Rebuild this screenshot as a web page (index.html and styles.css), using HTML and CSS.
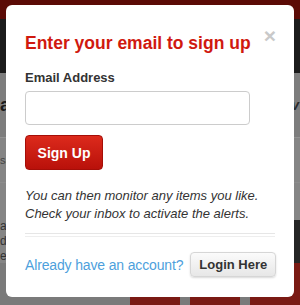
FILE: index.html
```html
<!DOCTYPE html>
<html>
<head>
<meta charset="utf-8">
<link rel="stylesheet" href="styles.css">
</head>
<body>
<div class="page">
  <div class="topbar"></div>
  <div class="navbar"></div>
  <div class="content">
    <div class="row row-a"><span class="frag-left">a</span><span class="frag-right">v</span></div>
    <div class="row row-b"><span class="frag-left small">sa</span></div>
    <div class="row row-c">
      <div class="frag-col"><span>a</span><span>d</span><span>e)</span></div>
      <div class="dark-img"></div>
    </div>
    <div class="products">
      <div class="prod"></div>
      <div class="prod"></div>
      <div class="prod"></div>
    </div>
  </div>
</div>

<div class="modal">
  <button class="close" type="button">×</button>
  <h1 class="title">Enter your email to sign up</h1>
  <label class="label" for="email">Email Address</label>
  <input class="input" id="email" type="text">
  <button class="btn-signup" type="button">Sign Up</button>
  <p class="note">You can then monitor any items you like.<br>Check your inbox to activate the alerts.</p>
  <div class="divider"></div>
  <div class="footer">
    <span class="already">Already have an account?</span>
    <button class="btn-login" type="button">Login Here</button>
  </div>
</div>
</body>
</html>
```

FILE: styles.css
```css
html, body {
  margin: 0;
  padding: 0;
}
body {
  width: 300px;
  height: 305px;
  overflow: hidden;
  font-family: "Liberation Sans", Arial, sans-serif;
  background: #7e7e7e;
}
.page {
  display: flex;
  flex-direction: column;
  height: 305px;
}
.topbar {
  height: 19px;
  background: #5b0b06;
}
.navbar {
  height: 54px;
  background: #1b1b1b;
}
.content {
  flex: 1;
  display: flex;
  flex-direction: column;
  background: #7d7d7d;
}
.row {
  display: flex;
  justify-content: space-between;
  align-items: center;
  color: #1a1a1a;
  font-size: 18px;
  font-weight: bold;
}
.row-a {
  height: 64px;
  border-bottom: 1px solid #939393;
}
.frag-left {
  margin-left: 0;
}
.frag-right {
  margin-right: 1px;
  font-style: italic;
  font-size: 14px;
  color: #2a2a2a;
}
.row-b {
  height: 44px;
  border-bottom: 1px solid #8c8c8c;
  background: #858585;
}
.small {
  font-size: 11px;
  font-weight: normal;
  color: #444;
}
.row-c {
  height: 80px;
  align-items: flex-start;
  background: #858585;
}
.frag-col {
  display: flex;
  flex-direction: column;
  padding-top: 36px;
  font-size: 12px;
  font-weight: normal;
  color: #333;
  line-height: 15px;
}
.dark-img {
  width: 14px;
  height: 80px;
  margin-top: 37px;
  background: #262626;
}
.products {
  flex: 1;
  display: flex;
  gap: 10px;
  padding-left: 130px;
  background: #7a7a7a;
}
.prod {
  width: 50px;
  background: #7a1a14;
}

.modal {
  position: absolute;
  left: 6px;
  top: 5px;
  width: 288px;
  height: 292px;
  box-sizing: border-box;
  padding: 27px 19px 0 19px;
  background: #fff;
  border-radius: 6px;
  display: flex;
  flex-direction: column;
  align-items: flex-start;
}
.close {
  position: absolute;
  top: 21px;
  right: 18px;
  padding: 0;
  border: 0;
  background: none;
  font-family: "Liberation Sans", Arial, sans-serif;
  font-size: 21px;
  font-weight: bold;
  line-height: 20px;
  color: #c9c9c9;
}
.title {
  margin: 0;
  font-size: 17.5px;
  line-height: 22px;
  font-weight: bold;
  color: #d0190f;
}
.label {
  margin-top: 15px;
  font-size: 13px;
  line-height: 18px;
  font-weight: bold;
  color: #333;
}
.input {
  margin: 4px 0 0 0;
  width: 225px;
  height: 34px;
  box-sizing: border-box;
  border: 1px solid #cccccc;
  border-radius: 4px;
  background: #fff;
  padding: 4px 6px;
}
.btn-signup {
  margin-top: 10px;
  width: 78px;
  height: 35px;
  box-sizing: border-box;
  border: 1px solid #a50e08;
  border-radius: 4px;
  background: linear-gradient(#dc2a1c, #b9110a);
  color: #fff;
  font-family: "Liberation Sans", Arial, sans-serif;
  font-size: 14px;
  font-weight: bold;
  padding: 0;
}
.note {
  margin: 17px 0 0 0;
  font-size: 13px;
  line-height: 18px;
  font-style: italic;
  color: #333;
}
.divider {
  margin-top: 10px;
  width: 250px;
  height: 2px;
  border-top: 1px solid #e6e6e6;
  border-bottom: 1px solid #eeeeee;
}
.footer {
  margin-top: 15px;
  display: flex;
  align-items: center;
  gap: 7px;
  white-space: nowrap;
}
.already {
  font-size: 14px;
  letter-spacing: -0.15px;
  color: #4d9fdc;
}
.btn-login {
  flex: none;
  height: 25px;
  width: 86px;
  box-sizing: border-box;
  padding: 0;
  border: 1px solid #d6d6d6;
  border-radius: 4px;
  background: linear-gradient(#fbfbfb, #e7e7e7);
  box-shadow: 0 1px 2px rgba(0,0,0,0.15);
  font-family: "Liberation Sans", Arial, sans-serif;
  font-size: 13px;
  font-weight: bold;
  color: #333;
}
```
